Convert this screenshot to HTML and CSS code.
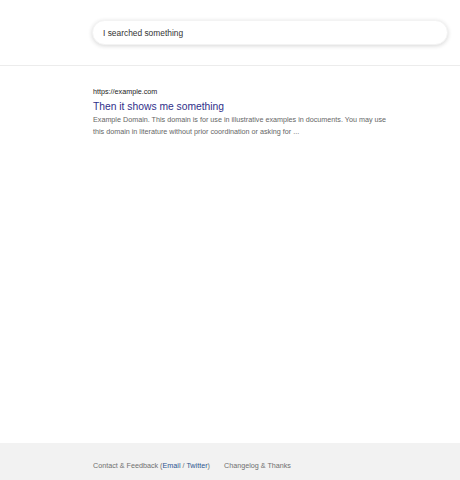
FILE: index.html
```html
<!DOCTYPE html>
<html lang="en">
<head>
<meta charset="utf-8">
<title>Search</title>
<link rel="stylesheet" href="styles.css">
</head>
<body>
<div class="page">
  <header class="header">
    <div class="search-box">
      <span class="query">I searched something</span>
    </div>
  </header>
  <main class="results">
    <div class="result">
      <div class="url">https://example.com</div>
      <a class="title" href="#">Then it shows me something</a>
      <p class="snippet">Example Domain. This domain is for use in illustrative examples in documents. You may use this domain in literature without prior coordination or asking for ...</p>
    </div>
  </main>
  <footer class="footer">
    <span class="foot-item">Contact &amp; Feedback (<a class="foot-link" href="#">Email</a> / <a class="foot-link" href="#">Twitter</a>)</span>
    <span class="foot-item">Changelog &amp; Thanks</span>
  </footer>
</div>
</body>
</html>
```
FILE: styles.css
```css
html, body {
  margin: 0;
  padding: 0;
  background: #ffffff;
}
body {
  font-family: "Liberation Sans", Arial, sans-serif;
  color: #202124;
}
.page {
  display: flex;
  flex-direction: column;
  min-height: 480px;
}
.header {
  height: 66px;
  box-sizing: border-box;
  border-bottom: 1px solid #ececec;
  padding: 20px 12px 0 92px;
}
.search-box {
  height: 25px;
  box-sizing: border-box;
  border-radius: 13px;
  background: #fff;
  box-shadow: 0 1px 4px rgba(32, 33, 36, 0.18);
  border: 1px solid #f3f3f3;
  display: flex;
  align-items: center;
  padding-left: 10px;
}
.query {
  font-size: 8.4px;
  color: #333;
}
.results {
  padding: 21px 0 0 93px;
  flex: 1;
}
.result {
  width: 300px;
}
.url {
  font-size: 7.2px;
  line-height: 10px;
  color: #222;
}
.title {
  display: block;
  font-size: 10.3px;
  line-height: 15px;
  margin-top: 2px;
  color: #30308a;
  text-decoration: none;
}
.snippet {
  margin: 0;
  font-size: 7.2px;
  line-height: 12px;
  color: #666;
}
.footer {
  height: 37px;
  box-sizing: border-box;
  background: #f2f2f2;
  display: flex;
  align-items: flex-start;
  gap: 14px;
  padding: 18px 0 0 93px;
  font-size: 7.2px;
  line-height: 9px;
  color: #707070;
}
.foot-link {
  color: #2a5590;
  text-decoration: none;
}
```
